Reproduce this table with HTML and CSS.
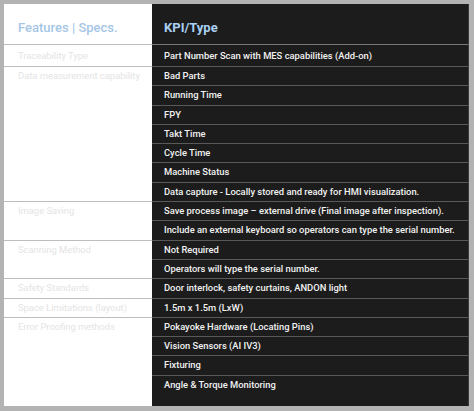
FILE: index.html
```
<!DOCTYPE html>
<html>
<head>
<meta charset="utf-8">
<link rel="stylesheet" href="styles.css">
</head>
<body>
<div class="spec">
  <div class="cell l head">Features | Specs.</div>
  <div class="cell r head">KPI/Type</div>

  <div class="cell l first">Traceability Type</div>
  <div class="cell r first">Part Number Scan with MES capabilities (Add-on)</div>

  <div class="cell l span7">Data measurement capability</div>
  <div class="cell r">Bad Parts</div>
  <div class="cell r">Running Time</div>
  <div class="cell r">FPY</div>
  <div class="cell r">Takt Time</div>
  <div class="cell r">Cycle Time</div>
  <div class="cell r">Machine Status</div>
  <div class="cell r">Data capture - Locally stored and ready for HMI visualization.</div>

  <div class="cell l span2">Image Saving</div>
  <div class="cell r">Save process image – external drive (Final image after inspection).</div>
  <div class="cell r">Include an external keyboard so operators can type the serial number.</div>

  <div class="cell l span2">Scanning Method</div>
  <div class="cell r">Not Required</div>
  <div class="cell r">Operators will type the serial number.</div>

  <div class="cell l">Safety Standards</div>
  <div class="cell r">Door interlock, safety curtains, ANDON light</div>

  <div class="cell l">Space Limitations (layout)</div>
  <div class="cell r">1.5m x 1.5m (LxW)</div>

  <div class="cell l span4">Error Proofing methods</div>
  <div class="cell r">Pokayoke Hardware (Locating Pins)</div>
  <div class="cell r">Vision Sensors (AI IV3)</div>
  <div class="cell r">Fixturing</div>
  <div class="cell r">Angle &amp; Torque Monitoring</div>
</div>
</body>
</html>
```

FILE: styles.css
```
html, body {
  margin: 0;
  padding: 0;
  background: #b3b3b3;
}
body {
  padding: 4px 0 0 4px;
  font-family: Roboto, "Liberation Sans", sans-serif;
}
.spec {
  display: grid;
  grid-template-columns: 148px 317px;
  grid-template-rows: 40px 22px repeat(16, 19.31px) 31px;
  width: 465px;
}
.cell {
  box-sizing: border-box;
  font-size: 9.4px;
  line-height: 18.31px;
  white-space: nowrap;
  overflow: hidden;
}
.l {
  grid-column: 1;
  background: #ffffff;
  color: #e4e4e4;
  padding-left: 14px;
  border-top: 1px solid #bdbdbd;
}
.r {
  grid-column: 2;
  background: #1c1c1c;
  color: #f2f2f2;
  font-weight: 500;
  padding-left: 12px;
  border-top: 1px solid #595959;
  border-right: 1px solid #3a3a3a;
}
.head {
  border-top: none;
  font-size: 13px;
  line-height: 16px;
  padding-top: 16px;
}
.l.head {
  color: #a6c6e6;
  font-weight: 500;
}
.r.head {
  color: #a9d0f2;
  font-weight: 700;
}
.first {
  line-height: 21px;
}
.r.first {
  border-top-color: #7a7a7a;
}
.span7 { grid-row: span 7; }
.span4 { grid-row: span 4; }
.span2 { grid-row: span 2; }
```
